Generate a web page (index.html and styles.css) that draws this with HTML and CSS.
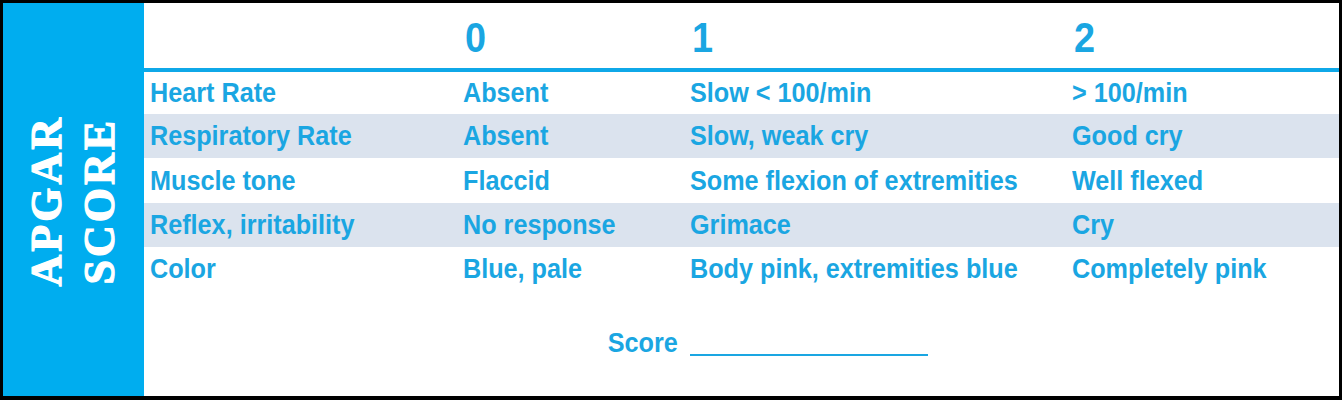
FILE: index.html
```html
<!DOCTYPE html>
<html lang="en">
<head>
<meta charset="utf-8">
<title>APGAR Score</title>
<link rel="stylesheet" href="styles.css">
</head>
<body>
<div class="card">
  <div class="side">
    <div class="side-title">APGAR<br>SCORE</div>
  </div>
  <div class="main">
    <div class="row head">
      <div></div>
      <div class="num"><span class="t">0</span></div>
      <div class="num"><span class="t">1</span></div>
      <div class="num"><span class="t">2</span></div>
    </div>
    <div class="row first">
      <div><span class="t">Heart Rate</span></div><div><span class="t">Absent</span></div><div><span class="t">Slow &lt; 100/min</span></div><div><span class="t">&gt; 100/min</span></div>
    </div>
    <div class="row alt">
      <div><span class="t">Respiratory Rate</span></div><div><span class="t">Absent</span></div><div><span class="t">Slow, weak cry</span></div><div><span class="t">Good cry</span></div>
    </div>
    <div class="row tall">
      <div><span class="t">Muscle tone</span></div><div><span class="t">Flaccid</span></div><div><span class="t">Some flexion of extremities</span></div><div><span class="t">Well flexed</span></div>
    </div>
    <div class="row alt">
      <div><span class="t">Reflex, irritability</span></div><div><span class="t">No response</span></div><div><span class="t">Grimace</span></div><div><span class="t">Cry</span></div>
    </div>
    <div class="row">
      <div><span class="t">Color</span></div><div><span class="t">Blue, pale</span></div><div><span class="t">Body pink, extremities blue</span></div><div><span class="t">Completely pink</span></div>
    </div>
    <div class="row score">
      <div></div><div class="score-label"><span class="t">Score</span></div><div><span class="blank"></span></div><div></div>
    </div>
  </div>
</div>
</body>
</html>
```
FILE: styles.css
```css
html, body {
  margin: 0;
  padding: 0;
  background: #000;
}
.card {
  width: 1342px;
  height: 400px;
  box-sizing: border-box;
  border: 3px solid #000;
  border-bottom-width: 4px;
  display: flex;
  background: #fff;
}
.side {
  width: 141px;
  flex: none;
  background: #00adef;
  display: flex;
  align-items: center;
  justify-content: center;
}
.side-title {
  writing-mode: vertical-rl;
  transform: rotate(180deg);
  font-family: "Liberation Serif", "DejaVu Serif", serif;
  font-weight: bold;
  font-size: 44px;
  line-height: 53px;
  color: #fff;
  -webkit-text-stroke: 1.2px #fff;
  text-align: center;
  letter-spacing: 3px;
  margin-left: -2px;
  margin-top: 2px;
}
.main {
  flex: 1;
  background: #fff;
  color: #1aa6e2;
  font-family: "Liberation Sans", Arial, sans-serif;
  font-weight: bold;
  font-size: 28px;
}
.t {
  display: inline-block;
  white-space: nowrap;
  transform: scaleX(0.9);
  transform-origin: left center;
}
.row {
  display: grid;
  grid-template-columns: 313px 227px 382px 1fr;
  padding-left: 6px;
  height: 44px;
  align-items: center;
  line-height: 1;
  box-sizing: border-box;
}
.row.first {
  height: 42px;
}
.row.tall {
  height: 45px;
}
.row.alt {
  background: #dbe3ee;
}
.head {
  border-bottom: 4px solid #0fa8e8;
  align-items: end;
  padding-bottom: 9px;
  height: 69px;
}
.num {
  font-size: 42px;
  padding-left: 2px;
}
.row.score {
  height: 100px;
  padding-top: 3px;
}
.score-label {
  text-align: right;
  padding-right: 12px;
}
.score-label .t {
  transform-origin: right center;
}
.blank {
  display: block;
  width: 238px;
  height: 2px;
  background: #1aa6e2;
  margin-top: 24px;
}
```
